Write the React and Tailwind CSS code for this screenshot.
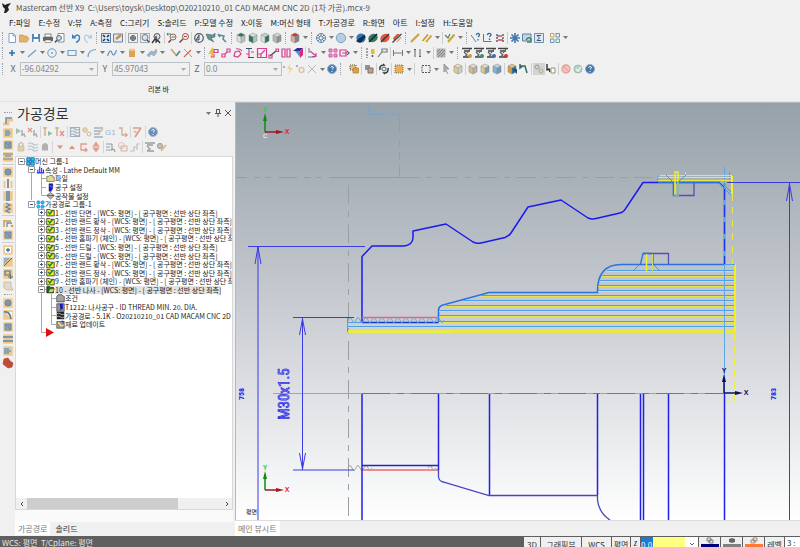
import React, { useState } from "react";

const menus = [
  "F:파일", "E:수정", "V:뷰", "A:측정", "C:그리기", "S:솔리드", "P:모델 수정",
  "X:이동", "M:머신 형태", "T:가공경로", "R:화면", "아트", "I:설정", "H:도움말",
];

// ":" grip, "|" separator, "v" drop-down arrow, "_" blank space
const fileBar =
  ": new open save print preview _ undo redo : fit repaint | zoomTarget zoomWindow zoomSelect | unzoom unzoomAll | rotate viewSwap prevView : cubeTop cubeFront cubeRight cubeIso : planeCube v : wire v sphere v shadeBlue shadeGreen shadeRed shadeHalf : pencil pencils v | levelPencil v : whatLine whatAngle distance | snow regen sigma _ tiles v";
const sketchBar =
  ": plus v line v circle v rect v arc v spline v cylinder v surface v _ trim breakX v : xTrim xJoin xRotate xMirror xScale xOffset xPair xCube | xProject v xArray xStretch v : noteYellow noteLink | dimH v dimPair v | hatch v : machA machB machC machD";
const selectBar =
  "spark gears cross v help : _ chainA | chainB | spin | solidSel v | _ winSel v cursor cubeGhost | boxA boxB boxC | boxD undoSel | gearPressed cursorBox | stop ok help";
const sideBar =
  "… sFace sRough sBlock sGroove | sKnob sDrill sBar sThread | sCut sBlock | sPoint sDiag sCopy sGhost … sKnob sCorner sBlock sFlat sChuck sRed";
const pathBarTop = "selAll selNone | regenAll regenBad | waves gearsGold wavesEdit g1 feed | wand | help";
const pathBarBottom = "lock waveGray ghost | down up insert expand | waveCursor overlap step | machGray postBall";

const cube = (top, left, right) => (
  <>
    <path d="M6 1 10 3 6 5 2 3Z" fill={top} />
    <path d="M2 3 6 5V11L2 9Z" fill={left} />
    <path d="M10 3 6 5V11L10 9Z" fill={right} />
    <path d="M6 1 10 3V9L6 11 2 9V3ZM2 3 6 5 10 3M6 5V11" stroke="#7b8884" strokeWidth=".5" />
  </>
);
const gold = (inner) => (
  <>
    <path d="M1.500 1.500H10.500V10.500H1.500Z" fill="#efc98c" stroke="#f0d3a2" />
    {inner}
  </>
);
const mach = (accent) => (
  <>
    <path d="M1 1.500H11M3 4H9M2 10H9" stroke="#444" strokeWidth="1.600" />
    <path d="M3 5 6 8 3 10M9 2 6 6" stroke="#566" strokeWidth="1.200" />
    <circle cx="9" cy="9" r="2" fill={accent} />
  </>
);
const magenta = (d) => <path d={d} stroke="#d3408f" strokeWidth="1.200" />;

const icons = {
  logo: <path d="M1 1 4 3 6 2 10 1 7 5 8 8 5 11 3 11 4 7 2 5Z" fill="#222" />,
  new: <path d="M3 1.500H7.500L9.500 3.500V10.500H3ZM7 2V4H9" fill="#fff" stroke="#5a8fc4" strokeWidth=".8" />,
  open: <path d="M1.500 10V3H5L6 4H9V6H11L9 10Z" fill="#e5b268" stroke="#c39753" strokeWidth=".7" />,
  save: <><path d="M2 2H10V10H2Z" fill="#5387b8" /><path d="M4 2H8V5H4ZM3.500 7H8.500V10H3.500Z" fill="#fff" /></>,
  print: <><path d="M3 2H9V5H3Z" fill="#fff" stroke="#666" strokeWidth=".8" /><path d="M1 5H11V9H1Z" fill="#666" /><path d="M3 8H9V10.500H3Z" fill="#fff" stroke="#666" strokeWidth=".6" /></>,
  preview: <><path d="M4 1.500H10V10H4Z" fill="#fff" stroke="#678" strokeWidth=".8" /><circle cx="5" cy="6" r="2.400" fill="#cfe0ee" stroke="#567" /><path d="M3 8 1 10.500" stroke="#456" strokeWidth="1.500" /></>,
  undo: <><path d="M4 5Q9 1 9.500 5.500 9.500 9 6 10.500" stroke="#3f7dc0" strokeWidth="1.500" /><path d="M2 2V6.500H6.500Z" fill="#3f7dc0" /></>,
  redo: <><path d="M8 5Q3 1 2.500 5.500 2.500 9 6 10.500" stroke="#b4cce2" strokeWidth="1.300" /><path d="M10 2V6.500H5.500Z" fill="#b4cce2" /></>,
  fit: <><path d="M1.500 1.500H10.500V10.500H1.500Z" fill="#dbe7f1" stroke="#5580a8" /><path d="M3 3 5 5M9 3 7 5M3 9 5 7M9 9 7 7" stroke="#235" strokeWidth="1.600" /></>,
  repaint: <><path d="M1.500 2H10.500V10H1.500Z" stroke="#6b8299" fill="#e0e8f0" /><path d="M4 7 9 3" stroke="#cf8a45" strokeWidth="2.500" /></>,
  zoomTarget: <><path d="M1.500 1.500H10.500V10.500H1.500Z" stroke="#555" strokeDasharray="1 1" /><circle cx="6" cy="6" r="2.500" fill="#aac3b6" stroke="#567" /><path d="M6 3V9M3 6H9" stroke="#456" strokeWidth=".8" /></>,
  zoomWindow: <><path d="M1.500 1.500H10.500V10.500H1.500Z" stroke="#667" strokeDasharray="1 1" /><circle cx="6" cy="5.500" r="3" fill="#d9e5ed" stroke="#678" /><path d="M8 8 10 10" stroke="#445" strokeWidth="1.400" /></>,
  zoomSelect: <><circle cx="6" cy="4.500" r="3" fill="#dde" stroke="#555" /><path d="M1 11 4 7M5 4V10L7 8.500 9 11" stroke="#333" strokeWidth="1.300" /></>,
  unzoom: <><circle cx="7" cy="5" r="3" fill="#eee" stroke="#a06050" /><path d="M5 8 2.500 10.500" stroke="#733" strokeWidth="1.400" /><path d="M5.500 5H9M1 2H5M2 1 1 2 2 3.500" stroke="#387" /></>,
  unzoomAll: <><circle cx="7.500" cy="4.500" r="3" fill="#eee" stroke="#8c5548" /><path d="M5 7 1.500 10.500" stroke="#644" strokeWidth="1.500" /><path d="M6 4.500H9" stroke="#c33" /></>,
  rotate: <><circle cx="6" cy="6" r="4.300" stroke="#555" strokeWidth="1.200" /><path d="M3 8 6 3V8Z" fill="#9bc0dd" stroke="#357" /></>,
  viewSwap: <path d="M1 2 8 3 10 1V5L6 6 9 10 3 7Z" fill="#5e9687" stroke="#457" strokeWidth=".5" />,
  prevView: <path d="M2 3 7 4 6 7 9 10M1 2 3 5" stroke="#5486a8" strokeWidth="1.500" />,
  cubeTop: cube("#2f7561", "#dce1df", "#b8c1be"),
  cubeFront: cube("#dce1df", "#2f7561", "#b8c1be"),
  cubeRight: cube("#c8d4cf", "#dce1df", "#2f7360"),
  cubeIso: cube("#d3d6d5", "#b5bab8", "#8f9694"),
  planeCube: cube("#cb3b28", "#e8a79d", "#7c858a"),
  wire: <><circle cx="6" cy="6" r="4.500" stroke="#6485a6" /><circle cx="6" cy="6" r="2" stroke="#6485a6" /><path d="M6 1V4M6 8V11M1 6H4M8 6H11M3 3 5 5M7 7 9 9M9 3 7 5M5 7 3 9" stroke="#6485a6" /></>,
  sphere: <circle cx="6" cy="6" r="4.700" fill="#b3cfe7" stroke="#7090ae" strokeWidth=".8" />,
  shadeBlue: <><circle cx="6" cy="6" r="4.600" fill="#2f76b6" /><path d="M1 9Q3 11 6 10.600L10.500 5 9.500 2.500Z" fill="#142e45" /></>,
  shadeGreen: <><ellipse cx="6" cy="6" rx="5" ry="4" fill="#36796a" transform="rotate(-35 6 6)" /><path d="M2 10 10 2" stroke="#222" strokeWidth="1.500" /></>,
  shadeRed: <><ellipse cx="6" cy="6" rx="5" ry="4" fill="#e2593c" transform="rotate(-35 6 6)" /><path d="M2 10 10 2" stroke="#333" strokeWidth="1.300" /></>,
  shadeHalf: <><path d="M2 6 6 2 9 2 3 9Z" fill="#d9583f" /><path d="M1.500 10.500 10.500 2" stroke="#444" strokeWidth="1.200" /><path d="M6 10 10 5" stroke="#dfa9a0" strokeWidth="1.800" /></>,
  pencil: <path d="M2 10 10 2" stroke="#d4a126" strokeWidth="2" />,
  pencils: <path d="M1.500 9 7 2.500M5 10 10.500 3.500" stroke="#d49c2b" strokeWidth="1.900" />,
  levelPencil: <><path d="M4 10 10.500 2.500" stroke="#d4a126" strokeWidth="2" /><path d="M1 3 4 6 6 2" stroke="#3c8d68" strokeWidth="1.200" /></>,
  whatLine: <><path d="M1 3 6 10" stroke="#4b8d82" /><path d="M6 3Q8 0 9.500 2.500 9.500 4 8 5M8 7V8.500" stroke="#336aa4" strokeWidth="1.300" /></>,
  whatAngle: <><path d="M1.500 2V9.500H9.500" stroke="#67737e" /><path d="M5 3Q7 0 9 2.500 8.500 4 7.500 5M7.500 6.500V8" stroke="#336aa4" strokeWidth="1.300" /></>,
  distance: <><path d="M3 2V10M9 2V10" stroke="#447" strokeWidth="1.300" strokeDasharray="2 1" /><path d="M3 4H8M4 8H9" stroke="#c55245" strokeWidth="1.500" /></>,
  snow: <path d="M6 1V11M1 6H11M2.500 2.500 9.500 9.500M9.500 2.500 2.500 9.500" stroke="#4379b0" strokeWidth="1.700" />,
  regen: <><path d="M1.500 2H10V9H1.500Z" fill="#c4d5e3" stroke="#5e81a0" /><path d="M5 8Q8 4 10 7V10H6" stroke="#3f8969" strokeWidth="1.500" /></>,
  sigma: <><path d="M1.500 1.500H10.500V10.500H1.500Z" fill="#e1eaf1" stroke="#6f8ea9" /><path d="M8 3.500H4L6.500 6 4 8.500H8" stroke="#345474" /></>,
  tiles: <><path d="M1.500 1.500H5V5H1.500Z" stroke="#d2a358" /><path d="M7 1.500H10.500V5H7ZM1.500 7H5V10.500H1.500Z" stroke="#6b95bd" /><path d="M7 7H10.500V10.500H7Z" stroke="#71a195" /></>,
  plus: <path d="M6 3V9M3 6H9" stroke="#2e71b5" strokeWidth="1.600" />,
  line: <path d="M2 10 10 3" stroke="#6a9cc9" strokeWidth="1.100" />,
  circle: <><circle cx="6" cy="6" r="4.200" stroke="#6a9cc9" /><path d="M5 6H7" stroke="#2e71b5" /></>,
  rect: <path d="M2 3.500H10V8.500H2Z" stroke="#6f9cc6" strokeWidth="1.100" />,
  arc: <path d="M2 10Q2 3 10 2.500" stroke="#6a9cc9" strokeWidth="1.100" />,
  spline: <path d="M1.500 9Q4 1 6 6T10.500 3" stroke="#6295c4" strokeWidth="1.200" />,
  cylinder: <><path d="M3 2.500H9V10H3Z" fill="#dda551" /><ellipse cx="6" cy="2.800" rx="3" ry="1.300" fill="#f1cd8d" /></>,
  surface: <path d="M1 8 5 4 8 5 10 2 11 5 8 9 5 7 3 10Z" fill="#9eb4c9" stroke="#8ca4b9" strokeWidth=".6" />,
  trim: <><path d="M1 2 6 8" stroke="#caa46b" strokeWidth="1.600" /><path d="M6 9 10 4" stroke="#598c79" strokeWidth="1.800" /></>,
  breakX: <><path d="M2 10 9 3" stroke="#d36b4d" strokeWidth="1.300" /><path d="M2 2 10 10" stroke="#8baaa3" /></>,
  xTrim: <><path d="M5 1 2 6 5 5 3 10" stroke="#e8b62f" strokeWidth="1.800" />{magenta("M6 2.500H10V5.500H6ZM3 10H6V7")}</>,
  xJoin: magenta("M7 2H10V5H7ZM2 7H5V10H2ZM5 7 7 5"),
  xRotate: magenta("M3 5 7 4 9 7 6 10 2 9ZM4 2Q8 1 10 4"),
  xMirror: <><path d="M2 1.500H8M4 10.500H10" stroke="#357" />{magenta("M5 2V10M7 5H10M2 7H5")}</>,
  xScale: magenta("M1.500 1.500H10.500V10.500H1.500ZM1.500 7H5V10.500M5 7 9 3"),
  xOffset: <><path d="M2 9 8 4" stroke="#456" strokeWidth="1.500" />{magenta("M1 8H4V11H1ZM8 2H10.500V4.500H8Z")}</>,
  xPair: magenta("M2 2H5V10H2ZM7 2H10V10H7Z"),
  xCube: <><path d="M1 4 5 1H11L8 4Z" fill="#362d9b" /><path d="M3 4H8V10Z" fill="#3da0c5" /><path d="M8 4 11 1V8L8 11Z" fill="#dc247e" /></>,
  xProject: <>{magenta("M3 4 9 9M9 6V9.500H5")}<path d="M2 1V6M1 10H8" stroke="#679" /></>,
  xArray: <path d="M2 2H5V5H2ZM7 2H10V5H7ZM2 7H5V10H2ZM7 7H10V10H7Z" fill="#c9a5bd" stroke="#df5ba9" />,
  xStretch: <>{magenta("M1 3H7V9H1ZM3 6H10")}<path d="M8 4 10.500 6 8 8" stroke="#357" /></>,
  noteYellow: <><path d="M2 1V11" stroke="#555" strokeDasharray="2 1" /><path d="M6 2H9.500V7H6Z" fill="#e9bc2a" /><path d="M7.500 8V10" stroke="#456" strokeWidth="1.500" /></>,
  noteLink: <path d="M1 10 5 5H10V2H5V5" stroke="#737d87" strokeWidth="1.200" />,
  dimH: <path d="M1.500 3V9M10.500 3V9M2 6H10" stroke="#707980" />,
  dimPair: <path d="M3 2V10M8 2V10M2 3 3 2 4 3M7 9 8 10 9 9" stroke="#59636b" />,
  hatch: <><path d="M1.500 1.500H10.500V10.500H1.500Z" fill="#b5b5b5" /><path d="M2 5 5 2M2 8 8 2M3 10 10 3M6 10 10 6" stroke="#777" strokeWidth=".8" /></>,
  machA: mach("#d49b34"),
  machB: mach("#44896e"),
  machC: mach("#3c6fae"),
  machD: mach("#cf3722"),
  machGray: <path d="M1 2H11M3 4H9M3 10H10M3 5 6 8 3 10" stroke="#858a8d" strokeWidth="1.300" />,
  spark: <><path d="M2 3V5M1 4H3" stroke="#999" /><path d="M8 1 5 6H8L6 11 11 5H8Z" fill="#ead19a" /></>,
  gears: <><circle cx="7.500" cy="7" r="2.400" stroke="#ddc6a7" strokeWidth="1.500" /><path d="M2 2 4 4M2 4 4 2" stroke="#aab" /></>,
  cross: <path d="M2 2 10 10M10 2 2 10" stroke="#a9beb8" />,
  help: <><circle cx="6" cy="6" r="4.500" fill="#4476aa" stroke="#8fadcb" /><path d="M4.500 4.500Q6 2.500 7.500 4.300 7.500 5.500 6 6.500M6 8V9" stroke="#fff" /></>,
  chainA: <><path d="M2 2H8V7H2Z" fill="#edc06d" stroke="#555" strokeDasharray="1 1" /><path d="M5 5H10.500V10H5Z" fill="#dca14a" stroke="#b37e31" strokeWidth=".7" /></>,
  chainB: <><path d="M2 2H7V7H2Z" fill="#8996a2" /><path d="M5 5H10V10H5Z" fill="#c7a178" stroke="#777" /></>,
  spin: <><path d="M2 7Q1 2 6 2L5 1M10 5Q11 10 6 10L7 11" stroke="#293f3a" strokeWidth="1.500" /><path d="M4 5 6 4 8 5V7L6 8 4 7Z" stroke="#567" /></>,
  solidSel: <path d="M2 2H10V10H2Z" fill="#e6af5b" stroke="#8d7440" strokeDasharray="1 1" />,
  winSel: <path d="M2 2.500H10V9.500H2Z" stroke="#555" strokeDasharray="2 1" />,
  cursor: <path d="M4 1V9L6 7.500 8 11M4 1 9 6H6" fill="#aaa" stroke="#999" />,
  cubeGhost: cube("#efdcb9", "#e4c897", "#c9d3c5"),
  boxA: cube("#efdcb9", "#dfb984", "#adb5bc"),
  boxB: cube("#f0ddba", "#e4c590", "#819db9"),
  boxC: cube("#bfd4e8", "#8db0d1", "#7197be"),
  boxD: <>{cube("#e8be76", "#d59c42", "#2b68a1")}<path d="M6 6H11V11Z" fill="#24568f" /></>,
  undoSel: <path d="M2 3H7L9 10M2 1V5L5 3" stroke="#346c5a" strokeWidth="1.500" />,
  gearPressed: <><path d="M0 0H12V12H0Z" fill="#d3d3d3" /><circle cx="4" cy="4" r="2" stroke="#999" /><circle cx="8" cy="8" r="2" stroke="#b9a98e" /></>,
  cursorBox: <><path d="M2 1V7L4 6 5 9" stroke="#222" strokeWidth="1.300" /><path d="M6 5H10V10H6Z" fill="#fff" stroke="#958f71" /></>,
  stop: <><circle cx="6" cy="6" r="4" fill="#f2c4bd" stroke="#e5a199" strokeWidth="1.400" /><path d="M3 3 9 9" stroke="#df9289" /></>,
  ok: <><circle cx="6" cy="6" r="4" fill="#b9d1c5" stroke="#9bbbac" /><path d="M4 6 6 8 9 4" stroke="#f5faf7" strokeWidth="1.200" /></>,
  sFace: <><path d="M1 9H6V5H11" stroke="#efc98c" strokeWidth="3" /><path d="M4 9V3H10" stroke="#6e90b3" strokeWidth="1.500" /></>,
  sRough: gold(<path d="M3 3H7L9 6 7 9H3Z" fill="#8ba4bb" />),
  sBlock: gold(<path d="M3 3H9V9H3ZM3 3 9 9M9 3 6 6" fill="#8fa3b6" stroke="#6c88a2" />),
  sGroove: gold(<path d="M1 3H11M3 5H9M1 8H11" stroke="#6c88a2" strokeWidth="1.200" />),
  sKnob: gold(<circle cx="6" cy="6" r="3" fill="#7c98b2" stroke="#64809b" />),
  sDrill: <><path d="M2.500 3V10M9.500 3V10" stroke="#efc98c" strokeWidth="2" /><path d="M6 1V10" stroke="#6e6e6e" strokeWidth="1.500" /></>,
  sBar: gold(<path d="M4 1H8V11H4Z" fill="#8296a9" />),
  sThread: gold(<path d="M4 1 8 3 4 5 8 7 4 9 8 11" stroke="#6684a0" strokeWidth="1.300" />),
  sCut: <><path d="M2 10V4H9" stroke="#e0ac58" strokeWidth="2" /><path d="M5 10V6H10" stroke="#6e90b3" strokeWidth="1.400" /><circle cx="10" cy="9" r="1.300" fill="#dba13d" /></>,
  sPoint: gold(<><path d="M3 3H9V9H3Z" fill="#fff" /><path d="M6 4V8M4 6H8" stroke="#3a71a7" strokeWidth="1.300" /></>),
  sDiag: gold(<><path d="M2 2H8L2 9Z" fill="#9cb0c1" /><path d="M2 10 10 2" stroke="#8b5550" /></>),
  sCopy: gold(<path d="M3 3H8V7H3ZM6 9H11M8.500 6.500V11" stroke="#54738f" strokeWidth="1.200" />),
  sGhost: <path d="M2 8V2H9V6L11 10H5Z" fill="#dadcda" stroke="#ddbd88" />,
  sCorner: gold(<><path d="M3 3H10V10Z" fill="#fff" /><path d="M2 3Q8 2 9 10" stroke="#67819a" strokeWidth="1.800" /></>),
  sFlat: gold(<path d="M1 4H11M1 8H11" stroke="#7b97b0" strokeWidth="2" />),
  sChuck: gold(<path d="M2 3H7V5H9V7H7V9H2Z" fill="#8aa3b9" />),
  sRed: <path d="M2 2 6 1 8 4 11 6 10 10 6 11 1 7Z" fill="#c44b35" stroke="#a43425" strokeWidth=".6" />,
  selAll: <><path d="M1 2 6 5 1 8Z" fill="#8fb59f" /><path d="M7 4V9L9 8 10 11" stroke="#999" strokeWidth="1.400" /></>,
  selNone: <><path d="M1 2 5 6M5 2 1 6" stroke="#de8272" strokeWidth="1.300" /><path d="M7 4V9L9 8 10 11" stroke="#999" strokeWidth="1.400" /></>,
  regenAll: <><path d="M3 1V10M1 2H5" stroke="#c9aa77" strokeWidth="1.600" /><path d="M6 5 10.500 7.500 6 10Z" fill="#83ae94" /></>,
  regenBad: <><path d="M3 1V10M1 2H5" stroke="#c9aa77" strokeWidth="1.600" /><path d="M6 5 10 10M10 5 6 10" stroke="#df7d6b" strokeWidth="1.300" /></>,
  waves: <path d="M1 3Q4 1 6 3T11 3M1 6Q4 4 6 6T11 6M1 9Q4 7 6 9T11 9M1.500 1.500V10.500H10.500V1.500Z" stroke="#8ea1b0" strokeWidth="1.200" />,
  gearsGold: <><circle cx="4" cy="4" r="2.200" fill="#edcf9a" stroke="#d1aa6c" /><circle cx="8" cy="8" r="2" stroke="#bcac92" /></>,
  wavesEdit: <><path d="M1 2H10M1 5H8M1 8H7M1 11H10" stroke="#8ea1b0" strokeWidth="1.500" /><path d="M5 8 10 3" stroke="#d0b280" strokeWidth="1.500" /></>,
  g1: <text x="0" y="9" fontSize="8" fill="#85a7c5" fontFamily="Liberation Sans">G1</text>,
  feed: <><path d="M2 2H5V9H10" stroke="#ce9b72" strokeWidth="1.300" /><path d="M8 7 10.500 9 8 11" stroke="#d37761" /></>,
  wand: <><path d="M1 2H9M3 11 9 2" stroke="#d8897a" strokeWidth="1.700" /><path d="M2 5 5 7" stroke="#d7b878" strokeWidth="2" /></>,
  lock: <><path d="M3 5H9V10H3Z" fill="#ddc69c" stroke="#c0a476" strokeWidth=".6" /><path d="M4 5V3Q6 0 8 3V5" stroke="#a9a9a9" strokeWidth="1.200" /></>,
  waveGray: <path d="M1 3Q4 1 6 3T11 3M1 6Q4 4 6 6T11 6M1 9Q4 7 6 9T11 9" stroke="#acbcc7" strokeWidth="1.200" />,
  ghost: <path d="M3 10V4Q6 0 9 4V10L7.500 9 6 10 4.500 9Z" fill="#a2a2a2" />,
  down: <path d="M3 4.500H9L6 8Z" fill="#dd7562" />,
  up: <path d="M3 8H9L6 4.500Z" fill="#dd7562" />,
  insert: <path d="M9 3H3V9H9M7 7 9 9 7 11" stroke="#df8574" strokeWidth="1.300" />,
  expand: <path d="M6 1 9 5H3ZM3 7H9L6 11ZM2 6H10" fill="#e08a79" stroke="#e08a79" strokeWidth=".7" />,
  waveCursor: <><path d="M1 3H7M1 6H5M1 9H7" stroke="#9eafbb" strokeWidth="1.300" /><path d="M7 3V9L9 8 10 11" stroke="#777" /></>,
  overlap: <><circle cx="4.500" cy="4.500" r="3" stroke="#d9b3a0" /><path d="M4 5H10V10H4Z" stroke="#d59c8c" /></>,
  step: <path d="M1 10H5V6H8V3H11M8 3V9" stroke="#b8b5af" strokeWidth="1.200" />,
  postBall: <><circle cx="4" cy="5" r="2.600" fill="#b8b8a6" stroke="#888" /><path d="M5 10 10 4" stroke="#d3a84f" strokeWidth="1.500" /></>,
  machine: <path d="M1 1H5.500V5.500H1ZM6.500 1H11V5.500H6.500ZM1 6.500H5.500V11H1ZM6.500 6.500H11V11H6.500Z" fill="#20d0fa" stroke="#124a9d" />,
  props: <path d="M2.500 10V6M5 10V2M7.500 10V4M10 10V6M1 10.500H11" stroke="#2432f0" strokeWidth="1.500" />,
  folder: <path d="M1 10V3H4L5 2H9V4H11V10Z" fill="#dbdc96" stroke="#55582c" strokeWidth=".8" />,
  toolSet: <><path d="M4 1H9V7L7 11H4Z" fill="#1419e4" stroke="#111" strokeWidth=".6" /><path d="M5 3 8 6" stroke="#c5c5ff" /></>,
  stock: <path d="M1 6 6 2 11 6 6 10.500ZM1 6H11" fill="#bbb" stroke="#333" strokeWidth=".8" />,
  group: (
    <g fill="#22c4fa" stroke="#1c70c0" strokeWidth=".8">
      <circle cx="3.200" cy="3.200" r="2.200" />
      <circle cx="8.800" cy="3.200" r="2.200" />
      <circle cx="3.200" cy="8.800" r="2.200" />
      <circle cx="8.800" cy="8.800" r="2.200" />
    </g>
  ),
  op: <><path d="M1 10.500V2H5L6 3H11V10.500Z" fill="#f0ee2a" stroke="#333" strokeWidth="1.100" /><path d="M3 5 5 8 9 3" stroke="#157f32" strokeWidth="1.800" /></>,
  opActive: <><path d="M1 10.500V2H5L6 3H10V10.500Z" fill="#176533" stroke="#222" strokeWidth=".9" /><path d="M3 10 5 5H11.500L9 10Z" fill="#d7d73e" stroke="#222" strokeWidth=".6" /></>,
  param: <path d="M1 10.500V3L3 1H8L10 3H11V10.500Z" fill="#a3a3a3" stroke="#333" strokeWidth=".9" />,
  tool: <><path d="M1 1H11V11H1Z" fill="#929292" stroke="#333" strokeWidth=".8" /><path d="M5 1H9V7L6 10Z" fill="#1119bb" /></>,
  path: <><path d="M1 1H11V11H1Z" fill="#222" /><path d="M1 4Q3 2 6 4T11 4M1 8Q3 6 6 8T11 8" stroke="#ddd" /></>,
  stockUpdate: <><path d="M1 2H11V11H1Z" fill="#999" stroke="#222" strokeWidth=".7" /><path d="M3 3 7 8 10 7" stroke="#ffe94d" strokeWidth="1.700" /><path d="M7 1H10V5Z" fill="#2525df" /></>,
};

const Icon = ({ name, className = "h-3 w-3" }) => (
  <svg viewBox="0 0 12 12" fill="none" className={`shrink-0 ${className}`} aria-hidden="true">
    {icons[name]}
  </svg>
);

const Tools = ({ items }) =>
  items.split(" ").map((item, i) => {
    if (item === ":") {
      return <span key={i} className="mx-[2px] h-3 w-[2px] shrink-0 border-l border-dotted border-gray-400" />;
    }
    if (item === "|") {
      return <span key={i} className="mx-px h-3 w-px shrink-0 bg-[#cfcfcf]" />;
    }
    if (item === "_") return <span key={i} className="w-1 shrink-0" />;
    if (item === "v") {
      return (
        <button key={i} aria-label="more" className="grid h-3 w-2 shrink-0 place-items-center">
          <svg viewBox="0 0 5 3" className="h-[3px] w-[5px]"><path d="M0 0H5L2.500 3Z" fill="#777" /></svg>
        </button>
      );
    }
    return (
      <button key={i} aria-label={item} className="shrink-0">
        <Icon name={item} />
      </button>
    );
  });

const AxisField = ({ label, value }) => (
  <>
    <label htmlFor={`axis-${label}`} className="w-[14px] shrink-0 text-center text-[9px] text-[#666]">
      {label}
    </label>
    <span className="relative w-[78px] shrink-0">
      <select
        id={`axis-${label}`}
        className="block h-[14px] w-full appearance-none border border-[#b9c0c6] bg-[#f0f0f0] pl-px font-['Noto_Sans',sans-serif] text-[8px] leading-3 text-[#858585]"
      >
        <option>{value}</option>
      </select>
      <svg viewBox="0 0 5 3" className="pointer-events-none absolute inset-y-0 right-1 my-auto h-[3px] w-[5px]">
        <path d="M0 0H5L2.500 3Z" fill="#aaa" />
      </svg>
    </span>
  </>
);

// guides: one letter per 10px column — v line, t tee, l elbow, + expandable, = open with a line below, - open, . empty
const rows = [
  ["-", "machine", "머신 그룹-1"],
  [".=", "props", "속성 - Lathe Default MM"],
  [".vt", "folder", "파일"],
  [".vt", "toolSet", "공구 설정"],
  [".vl", "stock", "공작물 설정"],
  [".-", "group", "가공경로 그룹-1"],
  ["..+", "op", "1 - 선반 단면 - [WCS: 평면] - [ 공구평면 : 선반 상단 좌측]"],
  ["..+", "op", "2 - 선반 랜드 황삭 - [WCS: 평면] - [ 공구평면 : 선반 상단 좌측]"],
  ["..+", "op", "3 - 선반 랜드 정삭 - [WCS: 평면] - [ 공구평면 : 선반 상단 좌측]"],
  ["..+", "op", "4 - 선반 홈파기 (체인) - [WCS: 평면] - [ 공구평면 : 선반 상단 좌측]"],
  ["..+", "op", "5 - 선반 드릴 - [WCS: 평면] - [ 공구평면 : 선반 상단 좌측]"],
  ["..+", "op", "6 - 선반 드릴 - [WCS: 평면] - [ 공구평면 : 선반 상단 좌측]"],
  ["..+", "op", "7 - 선반 랜드 황삭 - [WCS: 평면] - [ 공구평면 : 선반 상단 좌측]"],
  ["..+", "op", "8 - 선반 랜드 정삭 - [WCS: 평면] - [ 공구평면 : 선반 상단 좌측]"],
  ["..+", "op", "9 - 선반 홈파기 (체인) - [WCS: 평면] - [ 공구평면 : 선반 상단 좌측]"],
  ["..=", "opActive", "10 - 선반 나사 - [WCS: 평면] - [ 공구평면 : 선반 상단 좌측]"],
  ["..vt", "param", "조건"],
  ["..vt", "tool", "T1212: 나사공구 - ID THREAD MIN. 20. DIA."],
  ["..vt", "path", "가공경로 - 5.1K - O20210210_01 CAD MACAM CNC 2D (1차 가"],
  ["..vl", "stockUpdate", "재료 업데이트"],
  ["..l", null, ""],
];

const Guide = ({ kind }) => (
  <svg viewBox="0 0 10 9" fill="none" className="h-[9px] w-[10px] shrink-0 overflow-visible">
    {"vt+=".includes(kind) && <path d="M5.500 0V9" stroke="#a9a9a9" />}
    {kind === "l" && <path d="M5.500 0V4.500" stroke="#a9a9a9" />}
    {"tl+-=".includes(kind) && <path d="M5.500 4.500H10" stroke="#a9a9a9" />}
    {"+-=".includes(kind) && <path d="M2.500 1.500H8.500V7.500H2.500Z" fill="#fff" stroke="#9a9a9a" />}
    {"+-=".includes(kind) && <path d="M4 4.500H7" stroke="#345a9a" />}
    {kind === "+" && <path d="M5.500 3V6" stroke="#345a9a" />}
  </svg>
);

const Tree = () => (
  <ul className="grid h-[180px] shrink-0 auto-rows-fr">
    {rows.map(([guides, icon, text], i) => (
      <li key={i} className="flex min-h-0 items-center whitespace-nowrap text-[7px] leading-[8px] text-[#222]">
        {guides.split("").map((kind, j) => (
          <Guide key={j} kind={kind} />
        ))}
        {icon ? (
          <Icon name={icon} className="h-[9px] w-[9px]" />
        ) : (
          <svg viewBox="0 0 8 9" className="h-[9px] w-[8px]"><path d="M0 0 8 4.500 0 9Z" fill="#e01010" /></svg>
        )}
        <span className={icon === "opActive" ? "bg-[#e3e3e3]" : ""}>{text}</span>
      </li>
    ))}
  </ul>
);

const PathPanel = () => {
  const [tab, setTab] = useState("가공경로");
  return (
    <aside className="flex w-[218px] shrink-0 flex-col">
      <header className="flex h-[22px] shrink-0 items-center pl-[2px]">
        <h2 className="flex-1 text-[14px] leading-5 text-[#333]">가공경로</h2>
        <div className="flex items-center text-[#555]">
          <Tools items="v" />
          <button aria-label="pin" className="ml-px">
            <svg viewBox="0 0 10 10" fill="none" className="h-[10px] w-[10px]"><path d="M3.500 1.500H6.500V5.500M3.500 1.500V5.500M2 5.500H8M5 6V9" stroke="#555" /></svg>
          </button>
          <button aria-label="close">
            <svg viewBox="0 0 10 10" fill="none" className="h-[10px] w-[10px]"><path d="M2 2 8 8M8 2 2 8" stroke="#555" /></svg>
          </button>
        </div>
      </header>
      <div className="flex h-[15px] shrink-0 items-center opacity-80"><Tools items={pathBarTop} /></div>
      <div className="flex h-[15px] shrink-0 items-center opacity-80"><Tools items={pathBarBottom} /></div>
      <div className="mt-[2px] flex min-h-0 flex-1 flex-col overflow-hidden border border-[#d8d8d8] bg-white">
        <div className="min-h-0 flex-1 overflow-hidden"><Tree /></div>
        <div className="flex h-[11px] shrink-0 items-center bg-[#f0f0f0]">
          <button aria-label="scroll left" className="grid w-[11px] place-items-center">
            <svg viewBox="0 0 6 6" fill="none" className="h-[6px] w-[6px]"><path d="M4 1 2 3 4 5" stroke="#444" /></svg>
          </button>
          <div className="h-full flex-1"><div className="h-full w-[78%] bg-[#cdcdcd]" /></div>
          <button aria-label="scroll right" className="grid w-[11px] place-items-center">
            <svg viewBox="0 0 6 6" fill="none" className="h-[6px] w-[6px]"><path d="M2 1 4 3 2 5" stroke="#444" /></svg>
          </button>
        </div>
      </div>
      <div className="h-3 shrink-0 bg-[#fafafa]" />
      <div className="flex h-[14px] shrink-0 items-start text-[8px] leading-[13px]">
        {["가공경로", "솔리드"].map((name) => (
          <button
            key={name}
            onClick={() => setTab(name)}
            className={tab === name ? "bg-white px-[3px] text-[#777]" : "px-[5px] text-[#333]"}
          >
            {name}
          </button>
        ))}
      </div>
    </aside>
  );
};

// [y, left edge] of every roughing pass
const passes = [
  [270, 607], [275, 602], [280, 600], [285, 598], [290, 598], [295, 481],
  [300, 463], [305, 446], [310, 439], [315, 439], [321, 439], [326, 348],
];
const wave = (x, y, n) => `M${x} ${y}` + " q2 -5 4 0 t4 0".repeat(n);

const Axes = ({ x, y, right, up, text }) => (
  <g fontSize="7" fontWeight="bold" textAnchor="middle">
    <path d={`M${x} ${y}V${y - 14}`} stroke={up} strokeWidth="1.5" />
    <path d={`M${x - 2} ${y - 11}L${x} ${y - 19}L${x + 2} ${y - 11}Z`} fill={up} />
    <path d={`M${x} ${y}H${x + 14}`} stroke={right} strokeWidth="1.5" />
    <path d={`M${x + 11} ${y - 2}L${x + 19} ${y}L${x + 11} ${y + 2}Z`} fill={right} />
    <text x={x + 22} y={y + 2} fill={text[0]}>X</text>
    <text x={x} y={y - 20} fill={text[1]}>Y</text>
  </g>
);

const Drawing = () => (
  <svg viewBox="236 103 564 417" fill="none" className="block h-full w-full" fontFamily="Liberation Sans, sans-serif">
    {/* chuck outline and guide lines */}
    <path d="M368.500 108V114.500H388M392 114.500H399.500V133M399.500 140V146M399.500 152V159M399.500 165V177.500H329M322 177.500H316M311 177.500H304M297 177.500H278M271 177.500H265M260 177.500H254M247 177.500H236" stroke="#7da4c6" />
    <path d="M400 177.500H660M348.500 185V520" stroke="#9b9fa1" strokeDasharray="19 7 6 7" />

    {/* upper section */}
    <g stroke="#1a1aee" strokeWidth="1.500" strokeLinejoin="round">
      <path d="M362 322V256.500L372 246H404Q412.500 245 413 238V231L446 224 473 242Q477 244 481 243L505 237.500Q509 236 511 233L528 207 561 200 588 218Q592 219.500 596 218.500L620 213Q624 212 626 208L643 182.500H719L724.500 188" />
      <path d="M362 322.500H438.500" stroke="#1038d8" />
    </g>
    <path d="M673.500 182.500V195.500H694V182.500M643 253.500H668.500V264" stroke="#5a4cb8" strokeWidth="1.300" />
    <path d="M438.500 322V310Q439 306 443 305L489 292.500H597.500Q597 264 622 264.500H724.500V183" stroke="#2a72e2" strokeWidth="1.600" />
    <path d="M640.500 264 643 253.500H651M673.500 183V195H678" stroke="#2a72e2" strokeWidth="1.300" />
    <path d="M658 182.500H719L724.500 188" stroke="#2a72e2" />

    {/* roughing passes */}
    {passes.map(([y, x]) => (
      <g key={y}>
        <path d={`M${x} ${y + 0.5}H735`} stroke="#4f9ee8" />
        <path d={`M${x} ${y + 1.5}H735`} stroke="#e4e64c" />
      </g>
    ))}
    <path d="M348 330.500H735M348 332.500H735" stroke="#e9ea45" />
    <path d="M348 331.500H450" stroke="#e9ea66" />
    <path d="M735 264V332" stroke="#f0f026" strokeWidth="2" />
    <path d="M724 264.500H735M658 176V182M347.500 317V332M347 322.500H362M729.500 172V182L733 178" stroke="#4f9ee8" />
    <path d="M724.500 167V393" stroke="#5aa6e6" />
    <path d="M724.500 188V264" stroke="#1a35ee" strokeWidth="1.300" strokeDasharray="12 5" />
    <path d="M660 175.500H732M658 177.500H732M658 180.500H732" stroke="#e9ea45" />
    <path d="M732 176V194" stroke="#f0f026" strokeWidth="2" />
    <path d="M732.500 194V264" stroke="#e6e64e" strokeDasharray="7 6" />
    <path d="M734.500 334V401H725" stroke="#ecec4a" strokeDasharray="7 5" />
    <path d="M675 172H678V195H675ZM646.500 254V271" stroke="#f0f026" strokeWidth="1.500" />
    <path d="M652.500 254V273M685.500 172V176" stroke="#c5df66" />
    <path d="M666 175 673 182M686 175 678 182M639 265 633 271M654 265 660 271M719 183 731 195M723 184 731 192" stroke="#3f99df" />
    <path d="M672.500 195H678V182M653.500 254V264" stroke="#3f99df" />

    {/* thread */}
    <path d="M362 317.500H438M362 470H438" stroke="#ee6a6a" strokeWidth="1.300" />
    <path d={wave(348, 320, 12)} stroke="#64a6d8" />
    <path d={`${wave(348, 468, 3)}${wave(428, 468, 1)}`} stroke="#a5a5a5" />

    {/* lower half */}
    <path d="M273 393.500H725" stroke="#6fb3ea" />
    <path d="M362 393.500H725" stroke="#776caf" strokeDasharray="28 7 7 7" />
    <g stroke="#2020ea" strokeWidth="1.500">
      <path d="M362 394V520M438.500 394V470M489.500 394V495M597.500 394V495M640.500 394V520M643.500 394V520M668.500 394V520M724.500 394V520" />
      <path d="M362 465.500H438.500" stroke="#2424c4" />
      <path d="M438.500 470V477Q439 481 443 482L489 495.500H597.500V500Q599 513 610 520" stroke="#4646c8" strokeWidth="1.300" />
    </g>

    {/* dimensions */}
    <g stroke="#3b3be6">
      <path d="M248 246.500H365M727 182.500H800M293 317.500H354M293 470H354" />
      <path d="M258 246V520M255 264 258 247 261 264" />
      <path d="M302.500 318V470M299.500 335 302.500 319 305.500 335M299.500 453 302.500 469 305.500 453" />
      <path d="M789.500 183V520M786.500 201 789.500 184 792.500 201" />
    </g>
    <text transform="translate(289 394) rotate(-90)" textAnchor="middle" fontSize="15" fill="#b9c0f4" stroke="#3535e8" strokeWidth=".8" fontFamily="Roboto Condensed, Open Sans Condensed, Roboto, sans-serif">
      M30x1.5
    </text>
    <g fill="#1a1af0" fontSize="8" fontWeight="bold" textAnchor="middle" fontFamily="Roboto Condensed, Roboto, sans-serif">
      <text transform="translate(244 394) rotate(-90)">758</text>
      <text transform="translate(776 394) rotate(-90)">783</text>
    </g>

    {/* coordinate axes */}
    <Axes x={265} y={132} right="#a01818" up="#128a12" text={["#ee1c1c", "#16dd16"]} />
    <Axes x={265} y={490} right="#a01818" up="#128a12" text={["#ee1c1c", "#16dd16"]} />
    <Axes x={724} y={393} right="#0c0c66" up="#0c0c66" text={["#0c0c66", "#0c0c66"]} />
    <text x="263" y="138" fontSize="6" fill="#fff">C</text>
    <text x="246" y="514" fontSize="6" fill="#111" fontFamily="Noto Sans CJK KR, sans-serif">평면</text>
  </svg>
);

const StatusBar = () => (
  <footer className="flex h-[11px] shrink-0 items-start overflow-hidden bg-[#5f5f5f] text-[8px] leading-[13px] text-[#333]">
    <span className="flex-1 whitespace-pre pl-[2px] text-[#e4e4e4]">WCS: 평면  T/Cplane: 평면</span>
    <div className="flex h-[15px] gap-px whitespace-nowrap pt-px leading-[11px]">
      <button className="w-4 bg-[#f0f0f0]">3D</button>
      <button className="w-10 bg-[#f0f0f0]">그래픽뷰</button>
      <button className="w-[29px] bg-[#f0f0f0]">WCS</button>
      <button className="w-[18px] bg-[#f0f0f0]">평면</button>
      <label htmlFor="depth" className="w-[9px] bg-[#f0f0f0] text-center">z</label>
      <span className="flex w-[57px] bg-white">
        <span className="flex w-11 bg-[#ffff80]">
          <input id="depth" defaultValue="0.0" className="w-3 bg-[#1a7ad4] text-[8px] leading-[11px] text-white" />
        </span>
        <button aria-label="depth list" className="grid flex-1 place-items-center">
          <svg viewBox="0 0 6 4" fill="none" className="h-1 w-[6px]"><path d="M1 1 3 3 5 1" stroke="#666" /></svg>
        </button>
      </span>
      <button aria-label="wireframe color" className="flex w-[21px] flex-col items-center bg-[#f0f0f0]">
        <svg viewBox="0 0 8 7" fill="none" className="h-[7px] w-2"><path d="M1 1H5V4H1ZM3 3H7V6H3Z" stroke="#666" strokeWidth=".8" /></svg>
        <span className="h-1 w-[18px] bg-[#00007c]" />
      </button>
      <button aria-label="solid color" className="flex w-[21px] flex-col items-center bg-[#f0f0f0]">
        <svg viewBox="0 0 8 7" className="h-[7px] w-2"><path d="M1 2 4 1 7 2V5L4 6 1 5Z" fill="#666" /></svg>
        <span className="h-1 w-[18px] bg-[#808080]" />
      </button>
      <button aria-label="surface color" className="flex w-[21px] flex-col items-center bg-[#f0f0f0]">
        <svg viewBox="0 0 8 7" fill="none" className="h-[7px] w-2"><path d="M1 3H5V6H1ZM3 1H7V4H3Z" stroke="#8a7167" strokeWidth=".8" /></svg>
        <span className="h-1 w-[18px] bg-[#ff7a38]" />
      </button>
      <button className="w-[19px] bg-[#f0f0f0]">레벨</button>
      <span className="w-[15px] bg-white pl-[2px]">3 : </span>
    </div>
  </footer>
);

const App = () => {
  return (
    <div className="flex h-screen flex-col overflow-hidden bg-[#f0f0f0] font-['Noto_Sans_CJK_KR',sans-serif]">
      <header className="flex h-[15px] shrink-0 items-center whitespace-pre pl-px text-[8px] leading-3 text-[#555]">
        <Icon name="logo" />
        <h1 className="ml-[3px]">Mastercam 선반 X9  C:\Users\toysk\Desktop\O20210210_01 CAD MACAM CNC 2D (1차 가공).mcx-9</h1>
      </header>

      <nav className="flex h-[15px] shrink-0 items-center gap-2 whitespace-nowrap pl-[9px] text-[8px] leading-3 text-[#222]">
        {menus.map((menu) => (
          <button key={menu}>{menu}</button>
        ))}
      </nav>

      <div className="flex h-[15px] shrink-0 items-center"><Tools items={fileBar} /></div>
      <div className="flex h-[15px] shrink-0 items-center"><Tools items={sketchBar} /></div>
      <div className="flex h-[18px] shrink-0 items-center">
        <Tools items=":" />
        <AxisField label="X" value="-96.04292" />
        <AxisField label="Y" value="45.97043" />
        <AxisField label="Z" value="0.0" />
        <Tools items={selectBar} />
      </div>
      <div className="h-6 shrink-0 border-b border-[#e2e2e2] pt-[5px] pl-[148px] text-[7px] leading-3 text-[#111]">리본 바</div>

      <main className="flex min-h-0 flex-1">
        <div className="flex w-[15px] shrink-0 flex-col items-center pt-2">
          {sideBar.split(" ").map((item, i) => {
            if (item === "…") return <span key={i} className="my-[2px] w-2 border-t border-dotted border-gray-400" />;
            if (item === "|") return <span key={i} className="my-px h-px w-3 bg-[#cfcfcf]" />;
            return (
              <button key={i} aria-label={item}><Icon name={item} /></button>
            );
          })}
        </div>

        <PathPanel />

        <section className="ml-[2px] flex min-w-0 flex-1 flex-col">
          <div className="min-h-0 flex-1 border-t border-l border-[#b5babd] bg-linear-to-b from-[#96a1a9] via-[#cacdd3] via-50% to-white">
            <Drawing />
          </div>
          <div className="flex h-4 shrink-0 items-start border-t border-[#dcdcdc] text-[8px] leading-[15px] text-[#777]">
            <button className="bg-white px-[3px]">메인 뷰시트</button>
          </div>
        </section>
      </main>

      <StatusBar />
    </div>
  );
};

export default App;
